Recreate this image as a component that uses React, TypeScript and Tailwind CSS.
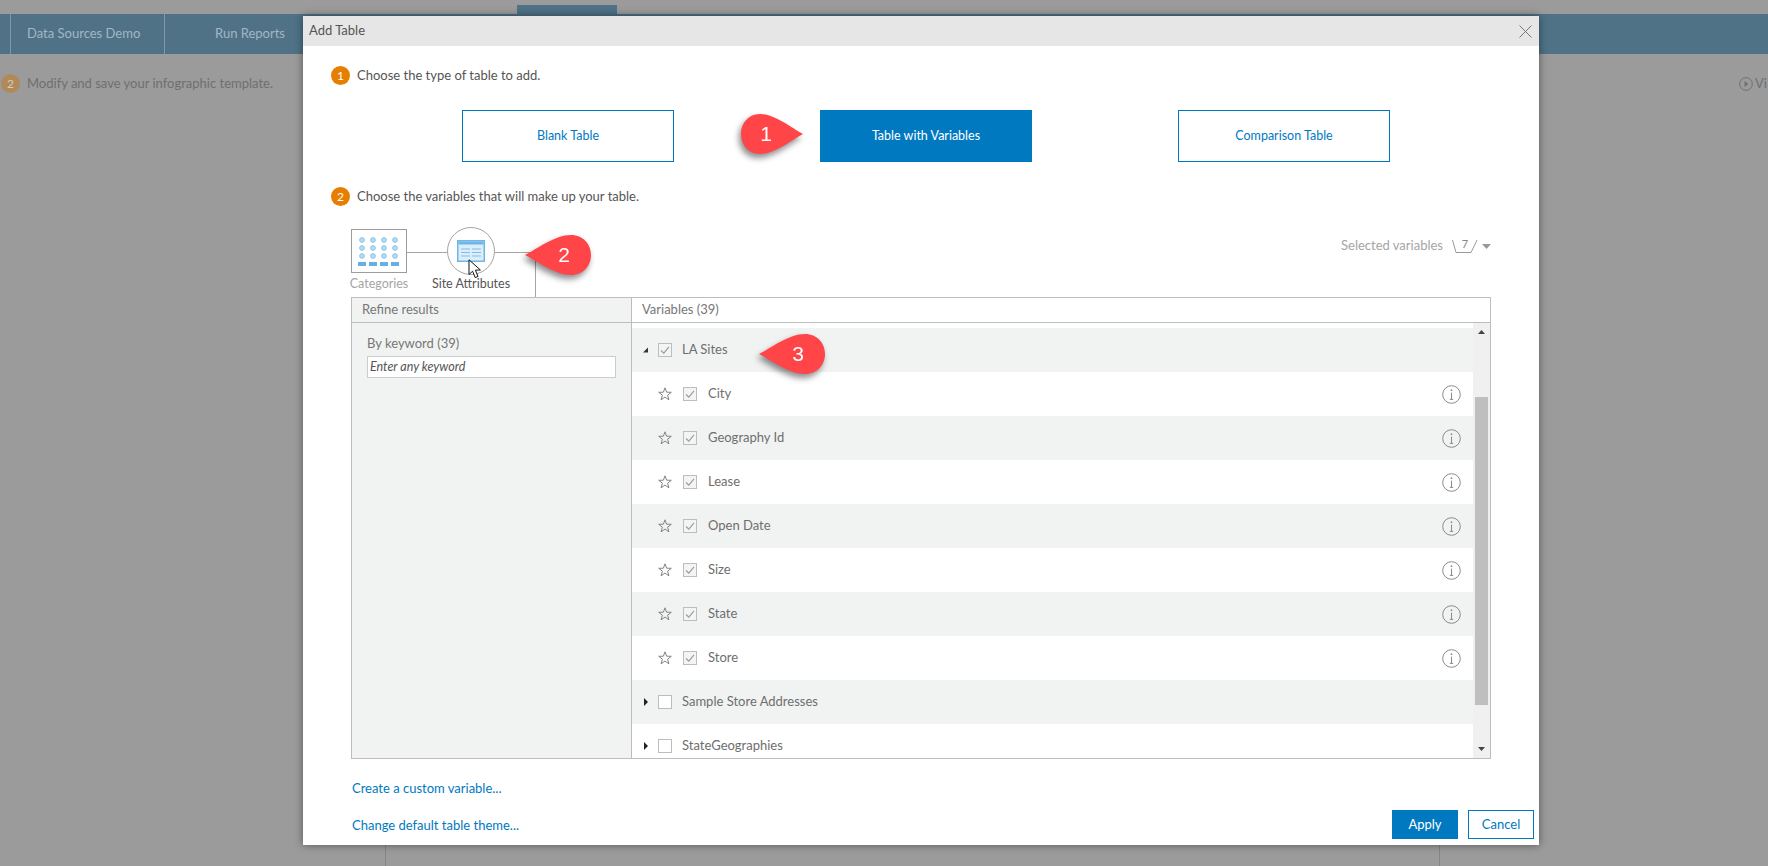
import React from "react";

const font = "font-['Lato','Liberation_Sans',sans-serif]";

const siteRows = ["City", "Geography Id", "Lease", "Open Date", "Size", "State", "Store"];

function Checkbox({ checked }: { checked?: boolean }) {
  return (
    <svg width="14" height="14" viewBox="0 0 14 14" className="shrink-0">
      <rect x="0.5" y="0.5" width="13" height="13" fill={checked ? "#f4f4f4" : "#fff"} stroke="#bdbdbd" />
      {checked && <path d="M3 7.5 L5.8 10.2 L11 3.8" fill="none" stroke="#9a9a9a" strokeWidth="1.1" />}
    </svg>
  );
}

function StarIcon() {
  return (
    <svg width="14" height="14" viewBox="0 0 14 14" className="shrink-0">
      <path
        d="M7 .8 L8.6 5.2 L13.3 5.3 L9.6 8.2 L10.9 12.8 L7 10.1 L3.1 12.8 L4.4 8.2 L.7 5.3 L5.4 5.2 Z"
        fill="none"
        stroke="#777"
        strokeWidth="0.9"
      />
    </svg>
  );
}

function InfoIcon() {
  return (
    <svg width="19" height="19" viewBox="0 0 19 19" className="shrink-0">
      <circle cx="9.5" cy="9.5" r="8.8" fill="none" stroke="#8a8a8a" strokeWidth="1" />
      <circle cx="9.5" cy="5.2" r="0.9" fill="#8a8a8a" />
      <path d="M9.5 7.6 V14 M7.8 14.4 H11.2" fill="none" stroke="#8a8a8a" strokeWidth="1" />
    </svg>
  );
}

function Callout({ n, flip, className }: { n: string; flip?: boolean; className: string }) {
  return (
    <div className={`absolute flex h-10 items-center drop-shadow-[-2px_4px_3px_rgba(0,0,0,0.45)] ${className}`}>
      <svg viewBox="0 0 66 40" preserveAspectRatio="none" className={`h-10 w-full ${flip ? "-scale-x-100" : ""}`}>
        <path d="M0 20 C12 14 30 0 46 0 C58 0 66 9 66 20 C66 31 58 40 46 40 C30 40 12 26 0 20 Z" fill="#ff4547" />
      </svg>
      <span
        className={`absolute top-0 flex h-10 w-5 items-center justify-center font-['Liberation_Sans',sans-serif] text-[21px] text-white ${
          flip ? "left-[15px]" : "left-[29px]"
        }`}
      >
        {n}
      </span>
    </div>
  );
}

function Step({ n, text }: { n: string; text: string }) {
  return (
    <div className="flex h-[19px] items-center gap-[7px] pl-[28px]">
      <span className="flex h-[19px] w-[19px] items-center justify-center rounded-full bg-[#e67e00] text-[12px] text-white">
        {n}
      </span>
      <span className="text-[13px] text-[#555]">{text}</span>
    </div>
  );
}

function TypeButton({ label, active }: { label: string; active?: boolean }) {
  return (
    <div
      className={`flex h-[52px] w-[212px] items-center justify-center border text-[12.5px] ${
        active ? "border-[#0079c1] bg-[#0079c1] text-white" : "border-[#0079c1] bg-white text-[#0079c1]"
      }`}
    >
      {label}
    </div>
  );
}

function CategoriesIcon() {
  const cols = [11, 22, 33, 44];
  return (
    <svg width="54" height="42" viewBox="1 1 54 42">
      {cols.map((x) =>
        [11, 19, 27].map((y) => (
          <circle key={`${x}-${y}`} cx={x} cy={y} r="2.4" fill="#b5daf4" stroke="#7fbde8" strokeWidth="0.8" />
        ))
      )}
      {cols.map((x) => (
        <rect key={x} x={x - 4} y="33" width="8" height="4" fill="#63b0e4" />
      ))}
    </svg>
  );
}

function SiteIcon() {
  return (
    <svg width="28" height="22" viewBox="0 0 28 22">
      <rect x="0.75" y="0.75" width="26.5" height="20.5" fill="#dceefb" stroke="#6fb6e6" strokeWidth="1.5" />
      <rect x="1.5" y="1.5" width="25" height="3" fill="#6fb6e6" />
      <path d="M4 9 H13 M15 9 H24 M4 12.5 H13 M15 12.5 H24 M4 16 H13 M15 16 H24" stroke="#7fbde8" strokeWidth="1" />
    </svg>
  );
}

function VariableRow({ label, shaded }: { label: string; shaded: boolean }) {
  return (
    <div className={`flex h-[44px] shrink-0 items-center pr-[12px] ${shaded ? "bg-[#f1f3f2]" : "bg-white"}`}>
      <div className="ml-[26px]">
        <StarIcon />
      </div>
      <div className="ml-[11px]">
        <Checkbox checked />
      </div>
      <span className="ml-[11px] flex-1 text-[13px] text-[#6e6e6e]">{label}</span>
      <InfoIcon />
    </div>
  );
}

function GroupRow({ label, open, checked, shaded }: { label: string; open?: boolean; checked?: boolean; shaded: boolean }) {
  return (
    <div className={`flex h-[44px] shrink-0 items-center ${shaded ? "bg-[#f1f3f2]" : "bg-white"}`}>
      <svg width="6" height="8" viewBox="0 0 6 8" className="ml-[11px] shrink-0">
        {open ? <path d="M0 6.5 H5 V1.5 Z" fill="#333" /> : <path d="M1 0 L5 4 L1 8 Z" fill="#222" />}
      </svg>
      <div className="ml-[9px]">
        <Checkbox checked={checked} />
      </div>
      <span className="ml-[10px] text-[13px] text-[#6e6e6e]">{label}</span>
    </div>
  );
}

export default function App() {
  return (
    <div className={`relative flex h-[866px] w-[1768px] flex-col overflow-hidden bg-[#9b9b9b] ${font}`}>
      {/* page behind the dialog */}
      <div className="h-[14px] pl-[517px]">
        <div className="mt-[5px] h-[9px] w-[100px] bg-[#4f7287]" />
      </div>
      <div className="flex h-[40px] items-center bg-[#4f7287] pl-[10px] text-[13px] text-[#a3b6c3]">
        <div className="flex h-full w-[155px] items-center border-x border-[#7d98aa] pl-[16px]">Data Sources Demo</div>
        <div className="pl-[50px]">Run Reports</div>
      </div>
      <div className="mt-[20px] flex items-center pl-[1px] pr-0 text-[13px] text-[#6f6f6f]">
        <span className="flex h-[19px] w-[19px] items-center justify-center rounded-full bg-[#b18a5c] text-[12px] text-[#d8cab8]">
          2
        </span>
        <span className="ml-[7px]">Modify and save your infographic template.</span>
        <div className="ml-auto flex items-center gap-[2px] text-[#6f6f6f]">
          <svg width="14" height="14" viewBox="0 0 14 14">
            <circle cx="7" cy="7" r="6.3" fill="none" stroke="#707070" />
            <path d="M5.5 4 L9.5 7 L5.5 10 Z" fill="#707070" />
          </svg>
          <span className="w-[13px] overflow-hidden">Vi</span>
        </div>
      </div>
      <div className="mt-auto flex h-[21px] pl-[385px]">
        <div className="h-full w-[1055px] border-x border-[#858585]" />
      </div>

      {/* dialog */}
      <div className="absolute left-[303px] top-[16px] flex h-[829px] w-[1236px] flex-col bg-white shadow-[0_0_8px_rgba(0,0,0,0.45)]">
        <div className="flex h-[30px] shrink-0 items-center justify-between bg-[#e6e6e6] pl-[6px] pr-[7px] text-[13px] text-[#555]">
          <span>Add Table</span>
          <svg width="13" height="13" viewBox="0 0 13 13">
            <path d="M.5 .5 L12.5 12.5 M12.5 .5 L.5 12.5" stroke="#777" strokeWidth="1" />
          </svg>
        </div>

        <div className="mt-[20px]">
          <Step n="1" text="Choose the type of table to add." />
        </div>
        <div className="mt-[25px] flex gap-[146px] pl-[159px]">
          <TypeButton label="Blank Table" />
          <TypeButton label="Table with Variables" active />
          <TypeButton label="Comparison Table" />
        </div>
        <div className="mt-[25px]">
          <Step n="2" text="Choose the variables that will make up your table." />
        </div>

        {/* category selector */}
        <div className="mx-[48px] mt-[21px] flex h-[70px] text-[12.5px]">
          <div className="flex w-[56px] flex-col items-center pt-[2px]">
            <div className="h-[44px] w-[56px] border border-[#9d9d9d]">
              <CategoriesIcon />
            </div>
            <span className="mt-[2px] whitespace-nowrap text-[#a5a5a5]">Categories</span>
          </div>
          <div className="mt-[25px] h-px w-[40px] bg-[#a5a5a5]" />
          <div className="flex w-[48px] flex-col items-center">
            <div className="flex h-[48px] w-[48px] items-center justify-center rounded-full border border-[#a5a5a5]">
              <SiteIcon />
            </div>
            <span className="whitespace-nowrap text-[#555]">Site Attributes</span>
          </div>
          <div className="mt-[25px] h-px w-[40px] bg-[#a5a5a5]" />
          <div className="mt-[25px] h-[45px] w-px bg-[#a5a5a5]" />
          <div className="ml-auto mt-[9px] flex h-[20px] items-center text-[13px] text-[#a5a5a5]">
            <span>Selected variables</span>
            <div className="ml-[9px] flex h-[13px] w-[26px] items-start justify-center">
              <svg width="26" height="13" viewBox="0 0 26 13" className="shrink-0">
                <path d="M.5 0 L4 12.5 H19 L25 0" fill="none" stroke="#9a9a9a" strokeWidth="1" />
                <text x="13" y="8" textAnchor="middle" fontSize="11" fill="#888">7</text>
              </svg>
            </div>
            <svg width="9" height="5" viewBox="0 0 9 5" className="ml-[4px]">
              <path d="M0 0 H9 L4.5 5 Z" fill="#999" />
            </svg>
          </div>
        </div>

        {/* variables table */}
        <div className="mx-[48px] flex h-[462px] border border-[#bdbdbd] text-[13px]">
          <div className="flex w-[280px] shrink-0 flex-col border-r border-[#bdbdbd] bg-[#f1f3f2]">
            <div className="flex h-[25px] shrink-0 items-center border-b border-[#bdbdbd] pl-[10px] text-[#777]">
              Refine results
            </div>
            <div className="pl-[15px] pt-[12px]">
              <div className="h-[16px] leading-[16px] text-[#777]">By keyword (39)</div>
              <div className="mt-[5px] flex h-[22px] w-[249px] items-center border border-[#ccc] bg-white pl-[2px] text-[12.5px] italic text-[#555]">
                Enter any keyword
              </div>
            </div>
          </div>
          <div className="flex min-w-0 flex-1 flex-col">
            <div className="flex h-[25px] shrink-0 items-center border-b border-[#bdbdbd] pl-[10px] text-[#777]">
              Variables (39)
            </div>
            <div className="flex min-h-0 flex-1">
              <div className="flex min-w-0 flex-1 flex-col overflow-hidden pt-[5px]">
                <GroupRow label="LA Sites" open checked shaded />
                {siteRows.map((r, i) => (
                  <VariableRow key={r} label={r} shaded={i % 2 === 1} />
                ))}
                <GroupRow label="Sample Store Addresses" shaded />
                <GroupRow label="StateGeographies" shaded={false} />
              </div>
              <div className="relative w-[17px] shrink-0 bg-[#f0f0f0]">
                <div className="mx-[2px] mt-[74px] h-[308px] bg-[#bfbfbf]" />
                <svg width="7" height="4" viewBox="0 0 7 4" className="absolute left-[5px] top-[7px]">
                  <path d="M3.5 0 L7 4 H0 Z" fill="#444" />
                </svg>
                <svg width="7" height="4" viewBox="0 0 7 4" className="absolute bottom-[7px] left-[5px]">
                  <path d="M0 0 H7 L3.5 4 Z" fill="#444" />
                </svg>
              </div>
            </div>
          </div>
        </div>

        {/* footer */}
        <div className="flex flex-1 justify-between pl-[49px] pr-[5px] text-[13px]">
          <div className="flex flex-col gap-[21px] pt-[21px] text-[#0079c1]">
            <span className="h-[16px] leading-[16px]">Create a custom variable...</span>
            <span className="h-[16px] leading-[16px]">Change default table theme...</span>
          </div>
          <div className="flex gap-[10px] pt-[51px]">
            <div className="flex h-[29px] w-[66px] items-center justify-center bg-[#0079c1] text-white">Apply</div>
            <div className="flex h-[29px] w-[66px] items-center justify-center border border-[#0079c1] text-[#0079c1]">
              Cancel
            </div>
          </div>
        </div>
      </div>

      {/* annotations over the dialog */}
      <Callout n="1" flip className="left-[741px] top-[114px] w-[62px]" />
      <Callout n="2" className="left-[525px] top-[235px] w-[66px]" />
      <Callout n="3" className="left-[759px] top-[334px] w-[66px]" />
      <svg width="14" height="20" viewBox="0 0 14 20" className="absolute left-[468px] top-[259px]">
        <path d="M1 .8 V15.5 L4.6 12.2 L7.2 18.6 L10 17.4 L7.4 11.2 L12.4 11 Z" fill="#fff" stroke="#111" strokeWidth="1" />
      </svg>
    </div>
  );
}
